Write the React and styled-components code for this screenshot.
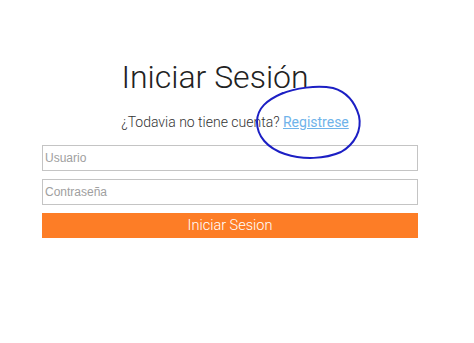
import React from "react";
import styled, { createGlobalStyle } from "styled-components";

const GlobalStyle = createGlobalStyle`
  body {
    margin: 0;
    background: #ffffff;
    font-family: Roboto, "Liberation Sans", sans-serif;
  }
`;

const Page = styled.div`
  width: 474px;
  height: 343px;
  box-sizing: border-box;
  padding: 58px 56px 0 42px;
`;

const Header = styled.div`
  text-align: center;
`;

const Title = styled.h1`
  margin: 0;
  padding-right: 30px;
  font-size: 32px;
  line-height: 38px;
  font-weight: 300;
  color: #222;
`;

const Subtitle = styled.p`
  margin: 17px 0 0;
  padding-left: 10px;
  font-size: 14px;
  line-height: 18px;
  font-weight: 300;
  color: #333;
`;

const RegisterWrap = styled.span`
  position: relative;
`;

const RegisterLink = styled.a`
  color: #6fb3ea;
  text-decoration: underline;
  font-weight: 400;
`;

const Scribble = styled.svg`
  position: absolute;
  left: -28px;
  top: -28px;
  width: 108px;
  height: 74px;
  overflow: visible;
  pointer-events: none;
`;

const Form = styled.form`
  display: flex;
  flex-direction: column;
  gap: 8px;
  margin-top: 14px;
`;

const Input = styled.input`
  box-sizing: border-box;
  width: 376px;
  height: 26px;
  margin: 0;
  padding: 0 2px;
  border: 1px solid #c4c4c4;
  border-radius: 0;
  font-family: "Liberation Sans", Arial, sans-serif;
  font-size: 12px;
  color: #333;
  &::placeholder {
    color: #a0a0a0;
  }
`;

const Button = styled.button`
  box-sizing: border-box;
  width: 376px;
  height: 25px;
  margin: 0;
  border: none;
  border-radius: 0;
  background: #fd7d26;
  color: #fff;
  font-family: Roboto, "Liberation Sans", sans-serif;
  font-size: 14.5px;
  font-weight: 300;
`;

export default function App() {
  return (
    <>
      <GlobalStyle />
      <Page>
        <Header>
          <Title>Iniciar Sesión</Title>
          <Subtitle>
            ¿Todavia no tiene cuenta?{" "}
            <RegisterWrap>
              <RegisterLink href="#">Registrese</RegisterLink>
              <Scribble viewBox="0 0 108 74">
                <path
                  d="M26 8 C40 2 62 -1 78 2 C92 6 100 16 104 30 C107 44 100 58 86 66 C70 73 48 74 30 68 C12 62 2 50 2 36 C2 22 12 14 28 7"
                  fill="none"
                  stroke="#1c1fc4"
                  strokeWidth="2"
                  strokeLinecap="round"
                />
              </Scribble>
            </RegisterWrap>
          </Subtitle>
        </Header>
        <Form>
          <Input placeholder="Usuario" />
          <Input type="password" placeholder="Contraseña" />
          <Button type="button">Iniciar Sesion</Button>
        </Form>
      </Page>
    </>
  );
}
